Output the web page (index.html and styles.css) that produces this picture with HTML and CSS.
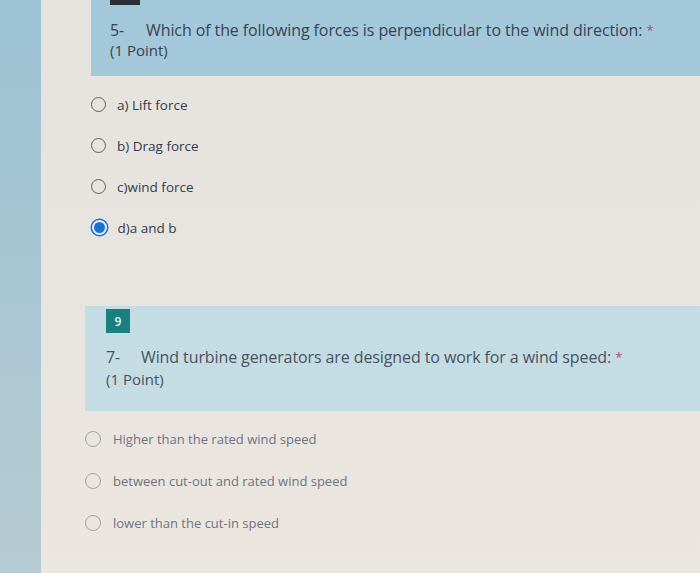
FILE: index.html
```html
<!DOCTYPE html>
<html>
<head>
<meta charset="utf-8">
<link rel="stylesheet" href="styles.css">
</head>
<body>
<div class="screen">
  <div class="edge"></div>
  <div class="page">
    <section class="q-card q1">
      <div class="q-num dark"></div>
      <div class="q-title"><span class="q-no">5-</span><span class="q-text">Which of the following forces is perpendicular to the wind direction:</span> <span class="req">*</span></div>
      <div class="q-points">(1 Point)</div>
    </section>
    <div class="options opts1">
      <div class="opt"><span class="radio"></span><span class="label">a) Lift force</span></div>
      <div class="opt"><span class="radio"></span><span class="label">b) Drag force</span></div>
      <div class="opt"><span class="radio"></span><span class="label">c)wind force</span></div>
      <div class="opt"><span class="radio checked"></span><span class="label">d)a and b</span></div>
    </div>
    <section class="q-card q2">
      <div class="q-num teal">9</div>
      <div class="q-title"><span class="q-no">7-</span><span class="q-text">Wind turbine generators are designed to work for a wind speed:</span> <span class="req">*</span></div>
      <div class="q-points">(1 Point)</div>
    </section>
    <div class="options opts2">
      <div class="opt"><span class="radio light"></span><span class="label">Higher than the rated wind speed</span></div>
      <div class="opt"><span class="radio light"></span><span class="label">between cut-out and rated wind speed</span></div>
      <div class="opt"><span class="radio light"></span><span class="label">lower than the cut-in speed</span></div>
    </div>
  </div>
</div>
</body>
</html>
```

FILE: styles.css
```css
html, body {
  margin: 0;
  padding: 0;
  width: 700px;
  height: 573px;
  overflow: hidden;
}
body {
  font-family: "Open Sans", "Noto Sans", sans-serif;
  color: #3d4452;
}
.screen {
  display: flex;
  width: 700px;
  height: 573px;
}
.edge {
  width: 41px;
  flex: none;
  background: linear-gradient(180deg, #9cc2d4 0%, #a9c6d3 50%, #b6ccd4 100%);
}
.page {
  flex: 1;
  background: linear-gradient(180deg, #e6e2dd 0%, #e8e4df 60%, #ece6e0 100%);
  display: flex;
  flex-direction: column;
}
.q-card {
  display: flex;
  flex-direction: column;
}
.q1 {
  margin-left: 50px;
  background: #a2c8da;
  padding: 0 0 16px 19px;
}
.q1 .q-num {
  width: 30px;
  height: 5px;
  background: #2a2f36;
  margin-bottom: 16px;
}
.q-title {
  font-size: 16px;
  line-height: 19px;
  color: #3b4250;
  white-space: nowrap;
  letter-spacing: -0.1px;
}
.q-no {
  display: inline-block;
  width: 36px;
}
.req {
  color: #b04a6a;
  font-size: 13px;
  vertical-align: top;
}
.q-points {
  font-size: 15px;
  line-height: 20px;
  color: #3b4250;
}
.options {
  display: flex;
  flex-direction: column;
}
.opts1 {
  margin-left: 50px;
  margin-top: 8px;
}
.opts1 .opt {
  height: 41px;
}
.opt {
  display: flex;
  align-items: center;
  gap: 11px;
}
.radio {
  width: 13px;
  height: 13px;
  border: 1.5px solid #5d6168;
  border-radius: 50%;
  flex: none;
  box-sizing: content-box;
}
.radio.checked {
  width: 11px;
  height: 11px;
  border: 2.5px solid #e6f0fa;
  background: #1673d6;
  box-shadow: 0 0 0 1.5px #1673d6;
  margin-left: 0.5px;
}
.radio.light {
  width: 14px;
  height: 14px;
  border: 1.5px solid #a0a4ab;
}
.label {
  font-size: 13.5px;
  color: #353c4a;
}
.q2 {
  margin-top: 58px;
  margin-left: 44px;
  background: #c4dce3;
  padding: 3px 0 21px 21px;
}
.q2 .q-num {
  width: 24px;
  height: 24px;
  background: #1b7f80;
  color: #e8f2f2;
  font-size: 12px;
  font-weight: 600;
  display: flex;
  align-items: center;
  justify-content: center;
  margin-bottom: 13px;
}
.q2 .q-title,
.q2 .q-points {
  line-height: 22px;
  color: #4a5160;
}
.q2 .q-no {
  width: 35px;
}
.opts2 {
  margin-left: 44px;
  margin-top: 7px;
}
.opts2 .opt {
  height: 42px;
  gap: 12px;
}
.opts2 .label {
  color: #6e7482;
  font-size: 13px;
}
```
